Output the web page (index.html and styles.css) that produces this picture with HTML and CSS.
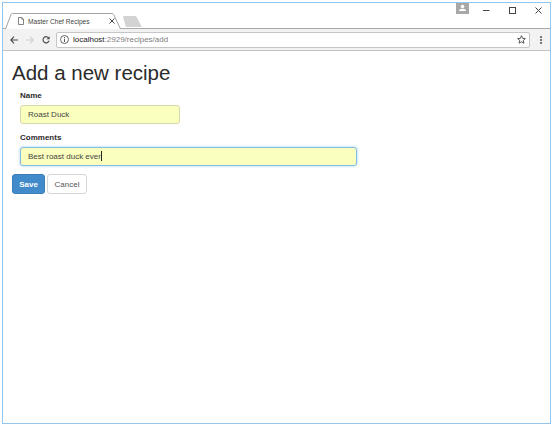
FILE: index.html
```html
<!DOCTYPE html>
<html lang="en">
<head>
    <meta charset="UTF-8">
    <title>Master Chef Recipes</title>
    <link rel="stylesheet" href="styles.css">
</head>
<body>
    <div class="window">
        <div class="titlebar">
            <div class="tab">
                <svg class="tab-shape" viewBox="0 0 116 16" width="116" height="16">
                    <path d="M0.5 16 L6 1.5 Q6.4 0.5 7.5 0.5 L107 0.5 Q108.2 0.5 108.7 1.5 L115.5 16" fill="#fff" stroke="#a3a3a3"/>
                </svg>
                <svg class="tab-page" viewBox="0 0 6 8" width="6" height="8">
                    <path d="M0.5 0.5 H3.8 L5.5 2.2 V7.5 H0.5 Z M3.8 0.5 V2.2 H5.5" fill="none" stroke="#666" stroke-width="0.8"/>
                </svg>
                <span class="tab-title">Master Chef Recipes</span>
                <svg class="tab-close" viewBox="0 0 6 6" width="6" height="6">
                    <path d="M0.5 0.5 L5.5 5.5 M5.5 0.5 L0.5 5.5" stroke="#444"/>
                </svg>
            </div>
            <svg class="new-tab" viewBox="0 0 20 11" width="20" height="11">
                <path d="M1 1 Q1 0 2 0 H13 Q14 0 14.6 1 L19.5 10 Q20 11 19 11 H5 Q4 11 3.6 10 Z" fill="#d3d3d3"/>
            </svg>
            <div class="user-badge">
                <svg viewBox="0 0 13 11" width="13" height="11">
                    <circle cx="6.5" cy="3.5" r="1.8" fill="#fff"/>
                    <path d="M3 8 Q3 5.8 6.5 5.8 Q10 5.8 10 8 Z" fill="#fff"/>
                </svg>
            </div>
            <div class="win-controls">
                <svg viewBox="0 0 7 7" width="7" height="7"><path d="M0 3.5 H6.5" stroke="#444"/></svg>
                <svg viewBox="0 0 7 7" width="7" height="7"><rect x="0.5" y="0.5" width="6" height="6" fill="none" stroke="#444"/></svg>
                <svg viewBox="0 0 7 7" width="7" height="7"><path d="M0.5 0.5 L6.5 6.5 M6.5 0.5 L0.5 6.5" stroke="#444"/></svg>
            </div>
        </div>

        <div class="toolbar">
            <svg class="nav-icon" viewBox="0 0 8 8" width="8" height="8">
                <path d="M8 4 H1 M4 0.6 L0.8 4 L4 7.4" fill="none" stroke="#4a4a4a" stroke-width="1.1"/>
            </svg>
            <svg class="nav-icon" viewBox="0 0 8 8" width="8" height="8">
                <path d="M0 4 H7 M4 0.6 L7.2 4 L4 7.4" fill="none" stroke="#cfcfcf" stroke-width="1.1"/>
            </svg>
            <svg class="nav-icon" viewBox="0 0 8 8" width="8" height="8">
                <path d="M6.8 2.2 A3.1 3.1 0 1 0 7.1 4.6" fill="none" stroke="#4a4a4a" stroke-width="1.1"/>
                <path d="M7.6 0.2 V3.2 H4.6 Z" fill="#4a4a4a"/>
            </svg>
            <div class="address">
                <svg class="info-icon" viewBox="0 0 9 9" width="9" height="9">
                    <circle cx="4.5" cy="4.5" r="4" fill="none" stroke="#555" stroke-width="0.9"/>
                    <path d="M4.5 3.8 V7 M4.5 2 V3" stroke="#555"/>
                </svg>
                <span class="url"><span class="url-host">localhost</span>:2929/recipes/add</span>
                <svg class="star-icon" viewBox="0 0 10 10" width="9" height="9">
                    <path d="M5 0.8 L6.2 3.7 L9.3 4 L7 6 L7.7 9.1 L5 7.5 L2.3 9.1 L3 6 L0.7 4 L3.8 3.7 Z" fill="none" stroke="#444"/>
                </svg>
            </div>
            <div class="menu-dots"><i></i><i></i><i></i></div>
        </div>

        <div class="page">
            <h1>Add a new recipe</h1>
            <form class="recipe-form">
                <div class="form-group">
                    <label for="name">Name</label>
                    <input id="name" class="field field-short" type="text" value="Roast Duck">
                </div>
                <div class="form-group">
                    <label for="comments">Comments</label>
                    <div class="field field-long field-focus" id="comments">Best roast duck ever<span class="caret"></span></div>
                </div>
            </form>
            <div class="buttons">
                <button class="btn btn-save" type="button">Save</button>
                <button class="btn btn-cancel" type="button">Cancel</button>
            </div>
        </div>
    </div>
</body>
</html>
```

FILE: styles.css
```css
* {
    margin: 0;
    padding: 0;
    box-sizing: border-box;
}

html, body {
    background: #fff;
}

body {
    width: 554px;
    height: 426px;
    overflow: hidden;
    padding: 2px 3px 2px 2px;
    font-family: "Liberation Sans", Arial, sans-serif;
}

.window {
    height: 422px;
    border: 1px solid #93c6ef;
    display: flex;
    flex-direction: column;
}

.titlebar {
    height: 26px;
    flex: none;
    display: flex;
    align-items: flex-end;
    padding-left: 2px;
    position: relative;
    background: #fff;
    border-bottom: 1px solid #a9a9a9;
}

.tab {
    position: relative;
    width: 116px;
    height: 16px;
    margin-bottom: -1px;
    display: flex;
    align-items: center;
    padding: 0 6px 0 13px;
    z-index: 1;
}

.tab-shape {
    position: absolute;
    left: 0;
    top: 0;
}

.tab-page {
    position: relative;
    flex: none;
    margin-right: 4px;
}

.tab-title {
    position: relative;
    font-size: 6.6px;
    color: #444;
    white-space: nowrap;
    flex: 1;
}

.tab-close {
    position: relative;
    flex: none;
}

.new-tab {
    margin: 0 0 1px 1px;
    flex: none;
}

.user-badge {
    position: absolute;
    left: 453px;
    top: 0;
    width: 13px;
    height: 11px;
    background: #a8a8a8;
}

.user-badge svg {
    display: block;
}

.win-controls {
    position: absolute;
    left: 480px;
    top: 4px;
    display: flex;
    gap: 19px;
}

.toolbar {
    height: 22px;
    flex: none;
    display: flex;
    align-items: center;
    padding-left: 7px;
    gap: 8px;
    background: #f2f2f2;
    border-bottom: 1px solid #c4c4c4;
}

.nav-icon {
    flex: none;
}

.address {
    width: 474px;
    height: 16px;
    margin-left: -2px;
    background: #fff;
    border: 1px solid #c6c6c6;
    border-radius: 2px;
    display: flex;
    align-items: center;
    padding: 0 3px 0 3px;
}

.info-icon {
    flex: none;
    margin-right: 4px;
}

.url {
    flex: 1;
    font-size: 8px;
    color: #808080;
    white-space: nowrap;
}

.url-host {
    color: #222;
}

.menu-dots {
    margin-left: 2px;
    display: flex;
    flex-direction: column;
    gap: 1px;
}

.menu-dots i {
    display: block;
    width: 2px;
    height: 2px;
    background: #777;
}

.page {
    flex: 1;
    background: #fff;
    padding: 10px 9px;
    color: #333;
}

h1 {
    font-size: 20.5px;
    font-weight: 400;
    line-height: 24px;
    color: #2b2b2b;
}

.recipe-form {
    padding: 0 8px;
    margin-top: 5px;
}

.form-group {
    margin-bottom: 8px;
}

label {
    display: block;
    font-size: 8px;
    font-weight: 700;
    line-height: 12px;
    margin-bottom: 3px;
    color: #2b2b2b;
}

.field {
    display: block;
    height: 19px;
    padding: 0 7px;
    background: #fbffbd;
    border: 1px solid #d6d9a8;
    border-radius: 3px;
    font-family: inherit;
    font-size: 8px;
    line-height: 17px;
    color: #444;
    outline: none;
}

.field-short {
    width: 160px;
}

.field-long {
    width: 337px;
}

.field-focus {
    border-color: #84bde8;
    box-shadow: 0 0 3px rgba(102, 175, 233, 0.6);
}

.caret {
    display: inline-block;
    width: 1px;
    height: 10px;
    background: #222;
    vertical-align: -2px;
}

.buttons {
    display: flex;
    gap: 2px;
}

.btn {
    height: 20px;
    border-radius: 3px;
    border: 1px solid;
    font-family: inherit;
    font-size: 8px;
}

.btn-save {
    width: 33px;
    background: #428bca;
    border-color: #3a7fb8;
    color: #fff;
    font-weight: 700;
}

.btn-cancel {
    width: 40px;
    background: #fff;
    border-color: #d6d6d6;
    color: #555;
}
```
